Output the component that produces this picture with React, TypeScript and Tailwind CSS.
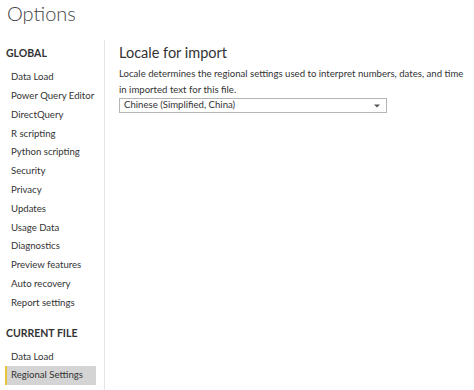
import React from 'react';

const globalItems = [
  'Data Load',
  'Power Query Editor',
  'DirectQuery',
  'R scripting',
  'Python scripting',
  'Security',
  'Privacy',
  'Updates',
  'Usage Data',
  'Diagnostics',
  'Preview features',
  'Auto recovery',
  'Report settings',
];

function NavItem({ label, active }: { label: string; active?: boolean }) {
  return (
    <div
      className={`h-[18.8px] flex items-center whitespace-nowrap pl-[4px] ml-[5px] w-[91px] border-l-2 ${
        active ? 'bg-[#d4d4d4] border-[#e8c33c]' : 'border-transparent'
      }`}
    >
      {label}
    </div>
  );
}

export default function App() {
  return (
    <div
      className="w-[474px] h-[390px] bg-white text-[#333] overflow-hidden"
      style={{ fontFamily: 'Lato, "Noto Sans", sans-serif' }}
    >
      <h1 className="text-[20px] font-light leading-[26px] pl-[7px] h-[40px] text-[#444]">Options</h1>
      <div className="flex">
        {/* sidebar */}
        <div className="w-[104px] shrink-0 text-[9.6px]">
          <div className="font-bold text-[10.5px] pl-[6px] h-[26px] flex items-center mt-[1px]">GLOBAL</div>
          <div className="mt-[1px]">
            {globalItems.map((item) => (
              <NavItem key={item} label={item} />
            ))}
          </div>
          <div className="font-bold text-[10.5px] pl-[6px] h-[26px] flex items-center mt-[9px]">CURRENT FILE</div>
          <div>
            <NavItem label="Data Load" />
            <NavItem label="Regional Settings" active />
          </div>
        </div>
        <div className="w-px bg-[#e6e6e6] self-stretch h-[350px]" />
        {/* content */}
        <div className="pl-[14px] pt-[2px] flex-1">
          <div className="text-[14.5px] text-[#333] h-[22px] flex items-center">Locale for import</div>
          <p className="text-[9.6px] leading-[16px] mt-[2px] whitespace-nowrap">
            Locale determines the regional settings used to interpret numbers, dates, and time
            <br />
            in imported text for this file.
          </p>
          <div className="w-[268px] h-[15px] border border-[#b5b5b5] flex items-center justify-between pl-[4px] pr-[6px] text-[9.6px]">
            <span>Chinese (Simplified, China)</span>
            <svg width="6" height="4" viewBox="0 0 6 4">
              <path d="M0 0.5 L6 0.5 L3 3.5 Z" fill="#555" />
            </svg>
          </div>
        </div>
      </div>
    </div>
  );
}
